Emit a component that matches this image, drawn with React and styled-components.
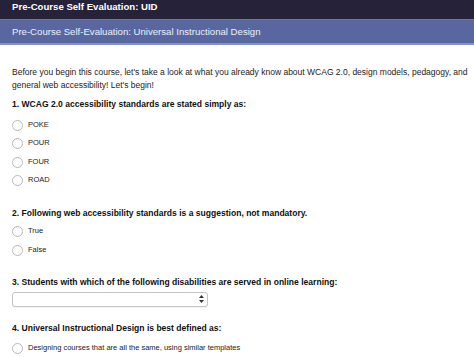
import React from "react";
import styled, { createGlobalStyle } from "styled-components";

const Global = createGlobalStyle`
  html, body { margin: 0; padding: 0; background: #fff; }
  body { font-family: "Liberation Sans", Arial, sans-serif; color: #222; }
  * { box-sizing: border-box; }
`;

const Page = styled.div`
  width: 474px;
  height: 357px;
  overflow: hidden;
`;

const TopBar = styled.div`
  height: 19px;
  background: #25223a;
  color: #fff;
  font-weight: bold;
  font-size: 9.6px;
  line-height: 13px;
  padding-left: 12px;
`;

const SubBar = styled.div`
  height: 26px;
  background: #5867a0;
  border-top: 1px solid #6a78ad;
  border-bottom: 2px solid #8593c4;
  color: #eef0f7;
  font-size: 9.6px;
  line-height: 24px;
  padding-left: 12px;
`;

const Content = styled.div`
  padding: 21px 0 0 12px;
  display: flex;
  flex-direction: column;
`;

const Intro = styled.p`
  margin: 0;
  font-size: 8.5px;
  line-height: 13px;
  color: #222;
  white-space: nowrap;
`;

const Question = styled.div`
  margin-top: ${(p) => p.$top}px;
  font-size: 8.55px;
  font-weight: bold;
  line-height: 12px;
  color: #111;
  white-space: nowrap;
`;

const Options = styled.div`
  display: flex;
  flex-direction: column;
  gap: ${(p) => p.$gap ?? 6.67}px;
  margin-top: ${(p) => p.$top ?? 8}px;
`;

const OptionRow = styled.label`
  display: flex;
  align-items: center;
  gap: 5px;
  height: 12px;
  font-size: 7.5px;
  color: #222;
  white-space: nowrap;
`;

const Radio = styled.span`
  width: 11px;
  height: 11px;
  border-radius: 50%;
  border: 1px solid #b9b9b9;
  background: #fff;
  flex: none;
  margin-top: 2px;
`;

const Select = styled.div`
  margin-top: 4px;
  width: 196px;
  height: 15px;
  border: 1px solid #c4c4c4;
  border-radius: 3px;
  background: #fff;
  box-shadow: 0 1px 1px rgba(0, 0, 0, 0.06);
  display: flex;
  align-items: center;
  justify-content: flex-end;
  padding-right: 3px;
`;

const Arrows = styled.svg`
  width: 5px;
  height: 8px;
`;

function Option({ children }) {
  return (
    <OptionRow>
      <Radio />
      {children}
    </OptionRow>
  );
}

export default function App() {
  return (
    <Page>
      <Global />
      <TopBar>Pre-Course Self Evaluation: UID</TopBar>
      <SubBar>Pre-Course Self-Evaluation: Universal Instructional Design</SubBar>
      <Content>
        <Intro>
          Before you begin this course, let's take a look at what you already know about WCAG 2.0, design models, pedagogy, and
          <br />
          general web accessibility! Let's begin!
        </Intro>
        <Question $top={6}>1. WCAG 2.0 accessibility standards are stated simply as:</Question>
        <Options>
          <Option>POKE</Option>
          <Option>POUR</Option>
          <Option>FOUR</Option>
          <Option>ROAD</Option>
        </Options>
        <Question $top={20.7}>2. Following web accessibility standards is a suggestion, not mandatory.</Question>
        <Options $top={6.3} $gap={7}>
          <Option>True</Option>
          <Option>False</Option>
        </Options>
        <Question $top={20}>3. Students with which of the following disabilities are served in online learning:</Question>
        <Select>
          <Arrows viewBox="0 0 5 8">
            <path d="M2.5 0 L5 3 L0 3 Z M2.5 8 L5 5 L0 5 Z" fill="#333" />
          </Arrows>
        </Select>
        <Question $top={15}>4. Universal Instructional Design is best defined as:</Question>
        <Options $top={7.5}>
          <Option>Designing courses that are all the same, using similar templates</Option>
        </Options>
      </Content>
    </Page>
  );
}
